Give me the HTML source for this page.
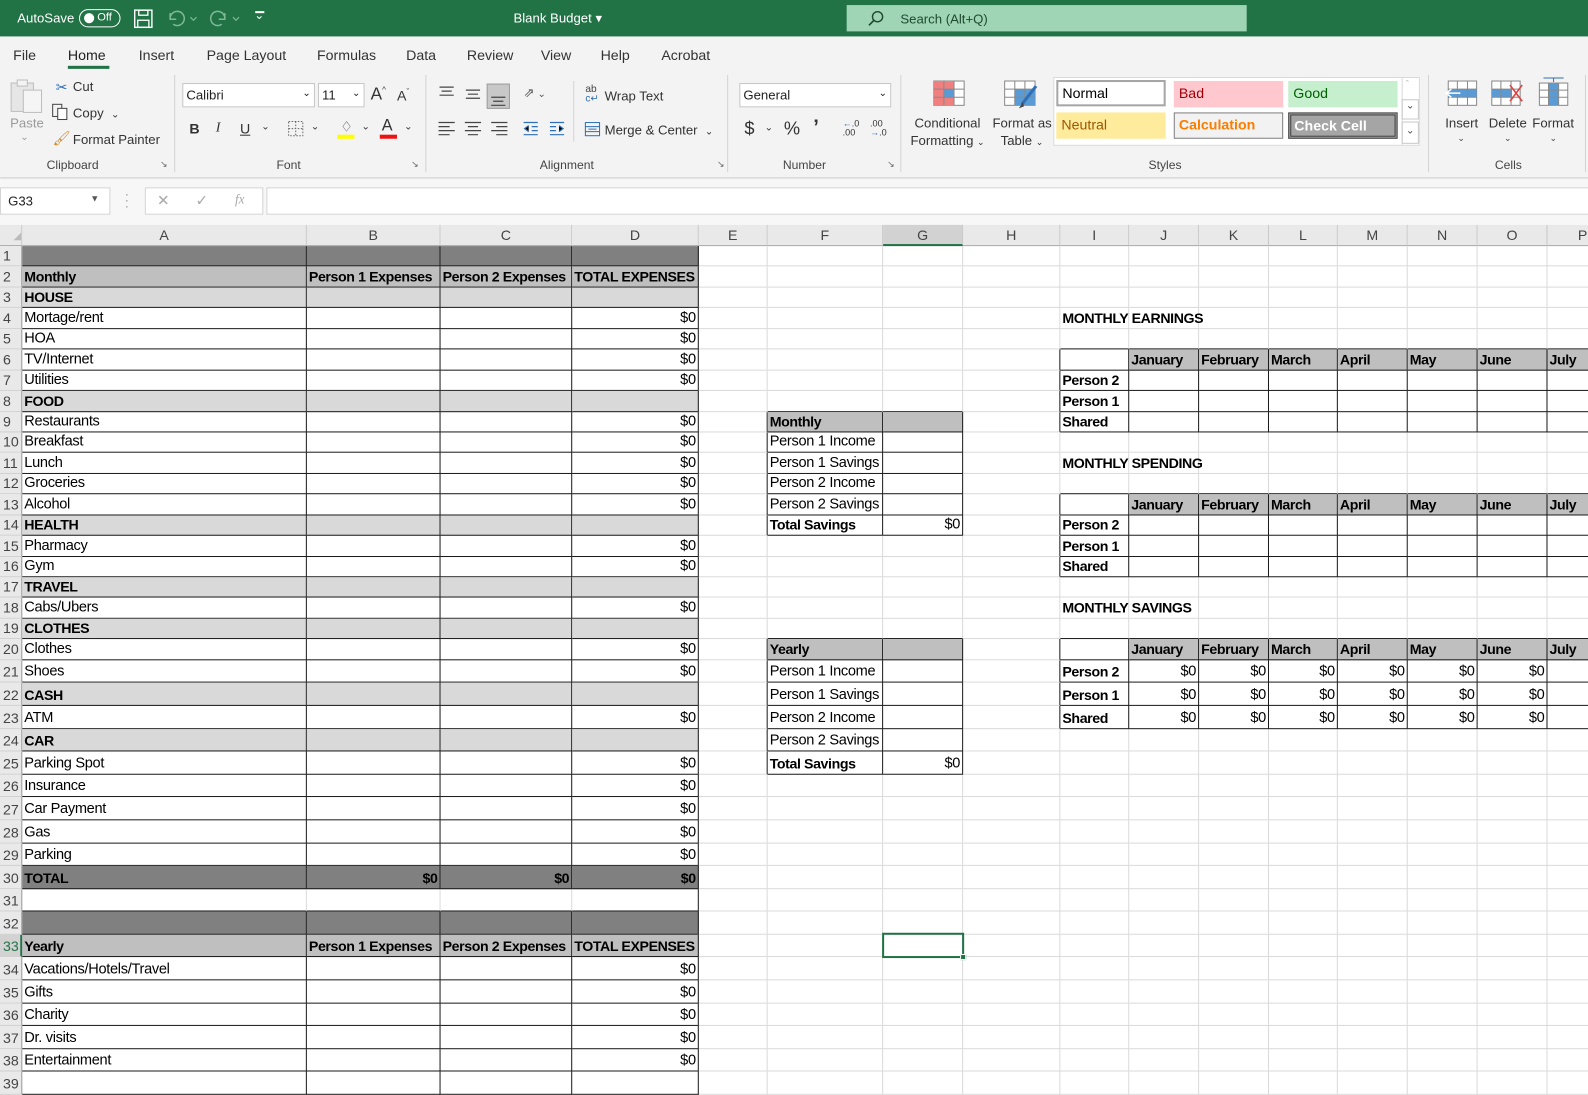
<!DOCTYPE html>
<html><head><meta charset="utf-8">
<style>
*{box-sizing:border-box;margin:0;padding:0}
body{width:1588px;height:1070px;overflow:hidden;background:#fff;font-family:"Liberation Sans",sans-serif;position:relative}
#w{position:absolute;left:0;top:0;width:1568px;height:1057px;transform:scale(1.01276);transform-origin:0 0}
.a{position:absolute;white-space:nowrap}
.t{font-size:13px;color:#333}
#title{left:0;top:0;width:1588px;height:36px;background:#217346}
#rib{left:0;top:36px;width:1588px;height:140px;background:#f3f3f3;border-bottom:1px solid #d6d6d6;box-shadow:0 2px 3px rgba(0,0,0,.12)}
#fbar{left:0;top:177px;width:1588px;height:45px;background:#f7f7f7}
.sep{position:absolute;width:1px;background:#d3d3d3;top:74px;height:96px}
.glab{position:absolute;top:156px;font-size:12px;color:#444}
.box{position:absolute;background:#fff;border:1px solid #c6c6c6;font-size:13px;color:#222;padding:3px 3px}
.sty{position:absolute;width:108px;height:26px;font-size:14px;padding:4px 5px}
table{position:absolute;left:0;top:222px;border-collapse:separate;border-spacing:0;table-layout:fixed;width:1588px}
td{border-right:1px solid #dadada;border-bottom:1px solid #dadada;font-size:14.4px;letter-spacing:-0.3px;color:#000;padding:0 2px 2px;vertical-align:bottom;white-space:nowrap;overflow:visible;line-height:16px}
tr.p td{height:20.45px}
tr.q td{height:22.6px}
tr.hd td{height:21px;background:#e9e9e9;text-align:center;color:#444;font-size:14px;vertical-align:middle;border-right:1px solid #c8c8c8;border-bottom:1px solid #ababab;padding:0;letter-spacing:0}
td.h{background:#e9e9e9;color:#444;border-right:1px solid #9b9b9b;border-bottom:1px solid #d0d0d0;padding:0 0 2px 3px;letter-spacing:0;font-size:14px}
.d{background:#808080}
.g{background:#bfbfbf}
.l{background:#d9d9d9}
.x{border-right-color:#1a1a1a;border-bottom-color:#1a1a1a}
.er{border-right-color:#1a1a1a}
.eb{border-bottom-color:#1a1a1a}
.n{text-align:right}
.B{font-weight:bold;letter-spacing:-0.4px;font-size:14px}
</style></head><body><div id="w">

<div id="title" class="a">
  <div class="a" style="left:17px;top:10px;color:#fff;font-size:13px">AutoSave</div>
  <div class="a" style="left:78px;top:9px;width:41px;height:18px;border:1.5px solid #fff;border-radius:9px"></div>
  <div class="a" style="left:83px;top:13px;width:10px;height:10px;border-radius:5px;background:#fff"></div>
  <div class="a" style="left:96px;top:11px;color:#fff;font-size:11px">Off</div>
  <svg class="a" style="left:132px;top:9px" width="19" height="19" viewBox="0 0 19 19"><rect x="1" y="1" width="17" height="17" fill="none" stroke="#fff" stroke-width="1.4"/><rect x="5" y="1" width="9" height="5" fill="none" stroke="#fff" stroke-width="1.3"/><rect x="4" y="11" width="11" height="7" fill="none" stroke="#fff" stroke-width="1.3"/></svg>
  <svg class="a" style="left:164px;top:9px" width="80" height="18" viewBox="0 0 80 18"><path d="M4 4v6h6M4 10a7 7 0 1 1 3 5" fill="none" stroke="#7fb896" stroke-width="1.5"/><path d="M24 8l3 3 3-3" fill="none" stroke="#7fb896" stroke-width="1.2"/><path d="M58 4v6h-6M58 10a7 7 0 1 0-3 5" fill="none" stroke="#7fb896" stroke-width="1.5"/><path d="M66 8l3 3 3-3" fill="none" stroke="#7fb896" stroke-width="1.2"/></svg>
  <div class="a" style="left:251px;top:8px;color:#fff;font-size:12px">&#8964;</div>
  <div class="a" style="left:252px;top:11px;width:9px;height:1.5px;background:#fff"></div>
  <div class="a" style="left:507px;top:10px;color:#fff;font-size:13px">Blank Budget &#9662;</div>
  <div class="a" style="left:836px;top:5px;width:395px;height:26px;background:#9fd4b4"></div>
  <svg class="a" style="left:857px;top:10px" width="16" height="16" viewBox="0 0 16 16"><circle cx="9.5" cy="6.5" r="5" fill="none" stroke="#1f4a30" stroke-width="1.4"/><path d="M6 10l-5 5" stroke="#1f4a30" stroke-width="1.6"/></svg>
  <div class="a" style="left:889px;top:11px;color:#1f4a30;font-size:13px">Search (Alt+Q)</div>
</div>

<div id="rib" class="a"></div>
<div class="a t" style="left:13px;top:46px;font-size:14px">File</div>
<div class="a t" style="left:67px;top:46px;font-size:14px;color:#222">Home</div>
<div class="a" style="left:67px;top:65px;width:41px;height:3px;background:#217346"></div>
<div class="a t" style="left:137px;top:46px;font-size:14px">Insert</div>
<div class="a t" style="left:204px;top:46px;font-size:14px">Page Layout</div>
<div class="a t" style="left:313px;top:46px;font-size:14px">Formulas</div>
<div class="a t" style="left:401px;top:46px;font-size:14px">Data</div>
<div class="a t" style="left:461px;top:46px;font-size:14px">Review</div>
<div class="a t" style="left:534px;top:46px;font-size:14px">View</div>
<div class="a t" style="left:593px;top:46px;font-size:14px">Help</div>
<div class="a t" style="left:653px;top:46px;font-size:14px">Acrobat</div>

<svg class="a" style="left:8px;top:77px" width="36" height="36" viewBox="0 0 36 36"><rect x="3" y="5" width="22" height="28" fill="#e6e6e6" stroke="#bdbdbd"/><rect x="9" y="2" width="10" height="6" fill="#f3f3f3" stroke="#bdbdbd"/><rect x="15" y="12" width="18" height="22" fill="#f5f5f5" stroke="#bdbdbd"/></svg>
<div class="a" style="left:10px;top:114px;font-size:13px;color:#9a9a9a">Paste</div>
<div class="a" style="left:20px;top:130px;font-size:10px;color:#9a9a9a">&#8964;</div>
<div class="a t" style="left:55px;top:78px;color:#2f6fb5;font-size:14px">&#9986;</div>
<div class="a t" style="left:72px;top:78px">Cut</div>
<svg class="a" style="left:51px;top:102px" width="17" height="17" viewBox="0 0 17 17"><rect x="1" y="1" width="9" height="12" fill="none" stroke="#444"/><rect x="6" y="5" width="9" height="11" fill="#fff" stroke="#444"/></svg>
<div class="a t" style="left:72px;top:104px">Copy &nbsp;<span style="font-size:10px">&#8964;</span></div>
<div class="a" style="left:52px;top:128px;font-size:14px;color:#d08a2a">&#128396;</div>
<div class="a t" style="left:72px;top:130px">Format Painter</div>
<div class="glab" style="left:46px">Clipboard</div>
<div class="a" style="left:158px;top:157px;font-size:9px;color:#666">&#8600;</div>
<div class="sep" style="left:172px"></div>

<div class="box" style="left:180px;top:82px;width:131px;height:24px">Calibri<span style="position:absolute;right:3px;top:4px;font-size:10px">&#8964;</span></div>
<div class="box" style="left:314px;top:82px;width:46px;height:24px">11<span style="position:absolute;right:3px;top:4px;font-size:10px">&#8964;</span></div>
<div class="a" style="left:366px;top:83px;font-size:17px;color:#333">A<sup style="font-size:8px">^</sup></div>
<div class="a" style="left:392px;top:86px;font-size:14px;color:#333">A<sup style="font-size:8px">&#711;</sup></div>
<div class="a" style="left:187px;top:119px;font-size:14px;font-weight:bold;color:#333">B</div>
<div class="a" style="left:213px;top:119px;font-size:14px;font-style:italic;font-family:'Liberation Serif',serif;color:#333">I</div>
<div class="a" style="left:237px;top:119px;font-size:14px;text-decoration:underline;color:#333">U</div>
<div class="a" style="left:258px;top:120px;font-size:10px;color:#333">&#8964;</div>
<svg class="a" style="left:284px;top:119px" width="16" height="16"><rect x="1" y="1" width="14" height="14" fill="none" stroke="#666" stroke-dasharray="1.5 1.5"/><path d="M8 1v14M1 8h14" stroke="#666" stroke-dasharray="1.5 1.5"/></svg>
<div class="a" style="left:307px;top:120px;font-size:10px;color:#333">&#8964;</div>
<div class="a" style="left:336px;top:117px;font-size:14px;color:#333">&#9826;</div>
<div class="a" style="left:333px;top:133px;width:17px;height:4px;background:#ffff00"></div>
<div class="a" style="left:357px;top:120px;font-size:10px;color:#333">&#8964;</div>
<div class="a" style="left:377px;top:116px;font-size:16px;color:#333">A</div>
<div class="a" style="left:375px;top:133px;width:17px;height:4px;background:#e11"></div>
<div class="a" style="left:399px;top:120px;font-size:10px;color:#333">&#8964;</div>
<div class="glab" style="left:273px">Font</div>
<div class="a" style="left:406px;top:157px;font-size:9px;color:#666">&#8600;</div>
<div class="sep" style="left:420px"></div>

<svg class="a" style="left:432px;top:82px" width="72" height="26"><g stroke="#444" stroke-width="1.2"><path d="M2 4h14M4 8h10M2 12h14"/><path d="M28 7h14M30 11h10M28 15h14"/></g><rect x="49" y="1" width="22" height="24" fill="#c8c8c8" stroke="#999"/><path d="M53 14h14M55 18h10M53 22h14" stroke="#444" stroke-width="1.2"/></svg>
<div class="a" style="left:517px;top:84px;font-size:13px;color:#555">&#8663;<span style="font-size:10px"> &#8964;</span></div>
<svg class="a" style="left:432px;top:119px" width="128" height="16"><g stroke="#444" stroke-width="1.2"><path d="M1 2h16M1 6h11M1 10h16M1 14h11"/><path d="M27 2h16M30 6h10M27 10h16M30 14h10"/><path d="M53 2h16M58 6h11M53 10h16M58 14h11"/><path d="M85 2h14M93 6h6M93 10h6M85 14h14M90 5l-4 3 4 3" stroke="#2f6fb5"/><path d="M111 2h14M111 6h6M111 10h6M111 14h14M120 5l4 3-4 3" stroke="#2f6fb5"/></g></svg>
<div class="sep" style="left:566px;top:80px;height:60px"></div>
<div class="a" style="left:578px;top:84px;font-size:10px;color:#444;line-height:9px">ab<br><span style="color:#2f6fb5">c&#8629;</span></div>
<div class="a t" style="left:597px;top:87px">Wrap Text</div>
<svg class="a" style="left:577px;top:120px" width="16" height="15"><rect x="1" y="1" width="14" height="13" fill="none" stroke="#2f6fb5"/><path d="M1 5h14M1 10h14" stroke="#2f6fb5"/><path d="M4 7.5h8" stroke="#2f6fb5"/></svg>
<div class="a t" style="left:597px;top:121px">Merge &amp; Center &nbsp;<span style="font-size:10px">&#8964;</span></div>
<div class="glab" style="left:533px">Alignment</div>
<div class="a" style="left:708px;top:157px;font-size:9px;color:#666">&#8600;</div>
<div class="sep" style="left:718px"></div>

<div class="box" style="left:730px;top:82px;width:150px;height:24px">General<span style="position:absolute;right:3px;top:4px;font-size:10px">&#8964;</span></div>
<div class="a" style="left:735px;top:117px;font-size:18px;color:#333">$</div>
<div class="a" style="left:755px;top:121px;font-size:10px;color:#333">&#8964;</div>
<div class="a" style="left:774px;top:117px;font-size:18px;color:#333">%</div>
<div class="a" style="left:803px;top:115px;font-size:20px;font-weight:bold;color:#333">&#8217;</div>
<div class="a" style="left:832px;top:118px;font-size:9px;line-height:9px;color:#333"><span style="color:#2f6fb5">&#8592;</span>.0<br>.00</div>
<div class="a" style="left:859px;top:118px;font-size:9px;line-height:9px;color:#333">.00<br><span style="color:#2f6fb5">&#8594;</span>.0</div>
<div class="glab" style="left:773px">Number</div>
<div class="a" style="left:876px;top:157px;font-size:9px;color:#666">&#8600;</div>
<div class="sep" style="left:889px"></div>

<svg class="a" style="left:921px;top:79px" width="32" height="26"><rect x="1" y="1" width="30" height="24" fill="#fff" stroke="#888"/><rect x="1" y="1" width="20" height="8" fill="#f08080"/><rect x="1" y="9" width="10" height="8" fill="#f08080"/><rect x="11" y="9" width="10" height="8" fill="#5b9bd5"/><rect x="1" y="17" width="20" height="8" fill="#f08080"/><path d="M11 1v24M21 1v24M1 9h30M1 17h30" stroke="#888"/></svg>
<div class="a t" style="left:903px;top:114px">Conditional</div>
<div class="a t" style="left:899px;top:131px">Formatting <span style="font-size:9px">&#8964;</span></div>
<svg class="a" style="left:991px;top:79px" width="34" height="30"><rect x="1" y="1" width="30" height="24" fill="#fff" stroke="#888"/><rect x="11" y="9" width="20" height="16" fill="#5b9bd5"/><path d="M11 1v24M21 1v24M1 9h30M1 17h30" stroke="#888"/><path d="M32 6L18 24" stroke="#2f6fb5" stroke-width="3"/><path d="M19 22l-4 6 5-2z" fill="#444"/></svg>
<div class="a t" style="left:980px;top:114px">Format as</div>
<div class="a t" style="left:988px;top:131px">Table <span style="font-size:9px">&#8964;</span></div>
<div class="a" style="left:1040px;top:76px;width:362px;height:68px;background:#fff;border:1px solid #dadada"></div>
<div class="sty a" style="left:1043px;top:79px;background:#fff;border:2px solid #a6a6a6;color:#000;padding:3px 4px">Normal</div>
<div class="sty a" style="left:1159px;top:80px;background:#ffc7ce;color:#9c0006">Bad</div>
<div class="sty a" style="left:1272px;top:80px;background:#c6efce;color:#006100">Good</div>
<div class="sty a" style="left:1043px;top:111px;background:#ffeb9c;color:#9c5700">Neutral</div>
<div class="sty a" style="left:1159px;top:111px;background:#f2f2f2;border:1px solid #7f7f7f;color:#fa7d00;font-weight:bold;padding:3px 4px">Calculation</div>
<div class="sty a" style="left:1272px;top:111px;background:#a5a5a5;border:3px double #3f3f3f;color:#fff;font-weight:bold;padding:2px 3px">Check Cell</div>
<div class="a" style="left:1384px;top:77px;width:17px;height:66px;border-left:1px solid #dadada"></div>
<div class="a" style="left:1388px;top:78px;font-size:9px;color:#aaa">&#710;</div>
<div class="a" style="left:1384px;top:98px;width:17px;height:20px;border:1px solid #c8c8c8;font-size:10px;text-align:center;color:#444">&#8964;</div>
<div class="a" style="left:1384px;top:120px;width:17px;height:22px;border:1px solid #c8c8c8;font-size:10px;text-align:center;color:#444;line-height:18px">&#8964;</div>
<div class="glab" style="left:1134px">Styles</div>
<div class="sep" style="left:1410px"></div>

<svg class="a" style="left:1426px;top:78px" width="36" height="28"><rect x="4" y="2" width="28" height="24" fill="#fff" stroke="#888"/><rect x="4" y="10" width="28" height="8" fill="#5b9bd5"/><path d="M13 2v24M23 2v24M4 10h28M4 18h28" stroke="#888"/><path d="M2 14h14M7 10l-5 4 5 4" fill="none" stroke="#fff" stroke-width="1.5"/></svg>
<svg class="a" style="left:1471px;top:78px" width="36" height="28"><rect x="2" y="2" width="28" height="24" fill="#fff" stroke="#888"/><rect x="2" y="10" width="20" height="8" fill="#5b9bd5"/><path d="M11 2v24M21 2v24M2 10h28M2 18h28" stroke="#888"/><path d="M20 6l12 16M32 6L20 22" stroke="#e04040" stroke-width="1.6"/></svg>
<svg class="a" style="left:1518px;top:74px" width="32" height="32"><path d="M6 3h20M16 3v4" stroke="#2f6fb5"/><rect x="2" y="8" width="28" height="22" fill="#fff" stroke="#888"/><rect x="11" y="8" width="10" height="22" fill="#5b9bd5"/><path d="M11 8v22M21 8v22M2 15h28M2 22h28" stroke="#888"/></svg>
<div class="a t" style="left:1427px;top:114px">Insert</div>
<div class="a t" style="left:1470px;top:114px">Delete</div>
<div class="a t" style="left:1513px;top:114px">Format</div>
<div class="a" style="left:1439px;top:131px;font-size:9px;color:#444">&#8964;</div>
<div class="a" style="left:1485px;top:131px;font-size:9px;color:#444">&#8964;</div>
<div class="a" style="left:1530px;top:131px;font-size:9px;color:#444">&#8964;</div>
<div class="glab" style="left:1476px">Cells</div>
<div class="sep" style="left:1565px"></div>

<div id="fbar" class="a"></div>
<div class="a" style="left:0;top:185px;width:109px;height:27px;background:#fff;border:1px solid #d4d4d4;font-size:13px;color:#222;padding:5px 7px">G33<span style="position:absolute;right:10px;top:5px;font-size:9px;color:#555">&#9660;</span></div>
<div class="a" style="left:123px;top:189px;font-size:13px;color:#999;line-height:6px">&#183;<br>&#183;<br>&#183;</div>
<div class="a" style="left:143px;top:185px;width:117px;height:27px;background:#fff;border:1px solid #d4d4d4"></div>
<div class="a" style="left:155px;top:189px;font-size:15px;color:#aaa">&#10005;</div>
<div class="a" style="left:193px;top:189px;font-size:15px;color:#aaa">&#10003;</div>
<div class="a" style="left:232px;top:189px;font-size:13px;color:#aaa;font-style:italic;font-family:'Liberation Serif',serif">fx</div>
<div class="a" style="left:263px;top:185px;width:1325px;height:27px;background:#fff;border:1px solid #d4d4d4"></div>

<table>
<colgroup><col style="width:22px"><col style="width:281px"><col style="width:132px"><col style="width:130px"><col style="width:125px"><col style="width:68px"><col style="width:114px"><col style="width:79px"><col style="width:96px"><col style="width:68px"><col style="width:69px"><col style="width:69px"><col style="width:68px"><col style="width:69px"><col style="width:69px"><col style="width:69px"><col style="width:80px"></colgroup>
<tr class="hd"><td style="color:#bbb;font-size:10px;text-align:right;vertical-align:bottom">&#9698;</td><td>A</td><td>B</td><td>C</td><td>D</td><td>E</td><td>F</td><td style="background:#d2d2d2;border-bottom:2px solid #217346">G</td><td>H</td><td>I</td><td>J</td><td>K</td><td>L</td><td>M</td><td>N</td><td>O</td><td style="text-align:left;padding-left:30px">P</td></tr>

<tr class="p"><td class="h">1</td><td class="x d"></td><td class="x d"></td><td class="x d"></td><td class="x d"></td><td></td><td></td><td></td><td></td><td></td><td></td><td></td><td></td><td></td><td></td><td></td><td></td></tr>
<tr class="p"><td class="h">2</td><td class="x g B">Monthly</td><td class="x g B">Person 1 Expenses</td><td class="x g B">Person 2 Expenses</td><td class="x g B">TOTAL EXPENSES</td><td></td><td></td><td></td><td></td><td></td><td></td><td></td><td></td><td></td><td></td><td></td><td></td></tr>
<tr class="p"><td class="h">3</td><td class="x l B">HOUSE</td><td class="x l"></td><td class="x l"></td><td class="x l"></td><td></td><td></td><td></td><td></td><td></td><td></td><td></td><td></td><td></td><td></td><td></td><td></td></tr>
<tr class="p"><td class="h">4</td><td class="x">Mortage/rent</td><td class="x"></td><td class="x"></td><td class="x n">$0</td><td></td><td></td><td></td><td></td><td class="B">MONTHLY EARNINGS</td><td></td><td></td><td></td><td></td><td></td><td></td><td></td></tr>
<tr class="p"><td class="h">5</td><td class="x">HOA</td><td class="x"></td><td class="x"></td><td class="x n">$0</td><td></td><td></td><td></td><td></td><td class="eb"></td><td class="eb"></td><td class="eb"></td><td class="eb"></td><td class="eb"></td><td class="eb"></td><td class="eb"></td><td class="eb"></td></tr>
<tr class="p"><td class="h">6</td><td class="x">TV/Internet</td><td class="x"></td><td class="x"></td><td class="x n">$0</td><td></td><td></td><td></td><td class="er"></td><td class="x"></td><td class="x g B">January</td><td class="x g B">February</td><td class="x g B">March</td><td class="x g B">April</td><td class="x g B">May</td><td class="x g B">June</td><td class="x g B">July</td></tr>
<tr class="p"><td class="h">7</td><td class="x">Utilities</td><td class="x"></td><td class="x"></td><td class="x n">$0</td><td></td><td></td><td></td><td class="er"></td><td class="x B">Person 2</td><td class="x"></td><td class="x"></td><td class="x"></td><td class="x"></td><td class="x"></td><td class="x"></td><td class="x"></td></tr>
<tr class="p"><td class="h">8</td><td class="x l B">FOOD</td><td class="x l"></td><td class="x l"></td><td class="x l"></td><td></td><td class="eb"></td><td class="eb"></td><td class="er"></td><td class="x B">Person 1</td><td class="x"></td><td class="x"></td><td class="x"></td><td class="x"></td><td class="x"></td><td class="x"></td><td class="x"></td></tr>
<tr class="p"><td class="h">9</td><td class="x">Restaurants</td><td class="x"></td><td class="x"></td><td class="x n">$0</td><td class="er"></td><td class="x g B">Monthly</td><td class="x g"></td><td class="er"></td><td class="x B">Shared</td><td class="x"></td><td class="x"></td><td class="x"></td><td class="x"></td><td class="x"></td><td class="x"></td><td class="x"></td></tr>
<tr class="p"><td class="h">10</td><td class="x">Breakfast</td><td class="x"></td><td class="x"></td><td class="x n">$0</td><td class="er"></td><td class="x">Person 1 Income</td><td class="x"></td><td></td><td></td><td></td><td></td><td></td><td></td><td></td><td></td><td></td></tr>
<tr class="p"><td class="h">11</td><td class="x">Lunch</td><td class="x"></td><td class="x"></td><td class="x n">$0</td><td class="er"></td><td class="x">Person 1 Savings</td><td class="x"></td><td></td><td class="B">MONTHLY SPENDING</td><td></td><td></td><td></td><td></td><td></td><td></td><td></td></tr>
<tr class="p"><td class="h">12</td><td class="x">Groceries</td><td class="x"></td><td class="x"></td><td class="x n">$0</td><td class="er"></td><td class="x">Person 2 Income</td><td class="x"></td><td></td><td class="eb"></td><td class="eb"></td><td class="eb"></td><td class="eb"></td><td class="eb"></td><td class="eb"></td><td class="eb"></td><td class="eb"></td></tr>
<tr class="p"><td class="h">13</td><td class="x">Alcohol</td><td class="x"></td><td class="x"></td><td class="x n">$0</td><td class="er"></td><td class="x">Person 2 Savings</td><td class="x"></td><td class="er"></td><td class="x"></td><td class="x g B">January</td><td class="x g B">February</td><td class="x g B">March</td><td class="x g B">April</td><td class="x g B">May</td><td class="x g B">June</td><td class="x g B">July</td></tr>
<tr class="p"><td class="h">14</td><td class="x l B">HEALTH</td><td class="x l"></td><td class="x l"></td><td class="x l"></td><td class="er"></td><td class="x B">Total Savings</td><td class="x n">$0</td><td class="er"></td><td class="x B">Person 2</td><td class="x"></td><td class="x"></td><td class="x"></td><td class="x"></td><td class="x"></td><td class="x"></td><td class="x"></td></tr>
<tr class="p"><td class="h">15</td><td class="x">Pharmacy</td><td class="x"></td><td class="x"></td><td class="x n">$0</td><td></td><td></td><td></td><td class="er"></td><td class="x B">Person 1</td><td class="x"></td><td class="x"></td><td class="x"></td><td class="x"></td><td class="x"></td><td class="x"></td><td class="x"></td></tr>
<tr class="p"><td class="h">16</td><td class="x">Gym</td><td class="x"></td><td class="x"></td><td class="x n">$0</td><td></td><td></td><td></td><td class="er"></td><td class="x B">Shared</td><td class="x"></td><td class="x"></td><td class="x"></td><td class="x"></td><td class="x"></td><td class="x"></td><td class="x"></td></tr>
<tr class="p"><td class="h">17</td><td class="x l B">TRAVEL</td><td class="x l"></td><td class="x l"></td><td class="x l"></td><td></td><td></td><td></td><td></td><td></td><td></td><td></td><td></td><td></td><td></td><td></td><td></td></tr>
<tr class="p"><td class="h">18</td><td class="x">Cabs/Ubers</td><td class="x"></td><td class="x"></td><td class="x n">$0</td><td></td><td></td><td></td><td></td><td class="B">MONTHLY SAVINGS</td><td></td><td></td><td></td><td></td><td></td><td></td><td></td></tr>
<tr class="p"><td class="h">19</td><td class="x l B">CLOTHES</td><td class="x l"></td><td class="x l"></td><td class="x l"></td><td></td><td class="eb"></td><td class="eb"></td><td></td><td class="eb"></td><td class="eb"></td><td class="eb"></td><td class="eb"></td><td class="eb"></td><td class="eb"></td><td class="eb"></td><td class="eb"></td></tr>
<tr class="p"><td class="h">20</td><td class="x">Clothes</td><td class="x"></td><td class="x"></td><td class="x n">$0</td><td class="er"></td><td class="x g B">Yearly</td><td class="x g"></td><td class="er"></td><td class="x"></td><td class="x g B">January</td><td class="x g B">February</td><td class="x g B">March</td><td class="x g B">April</td><td class="x g B">May</td><td class="x g B">June</td><td class="x g B">July</td></tr>
<tr class="q"><td class="h">21</td><td class="x">Shoes</td><td class="x"></td><td class="x"></td><td class="x n">$0</td><td class="er"></td><td class="x">Person 1 Income</td><td class="x"></td><td class="er"></td><td class="x B">Person 2</td><td class="x n">$0</td><td class="x n">$0</td><td class="x n">$0</td><td class="x n">$0</td><td class="x n">$0</td><td class="x n">$0</td><td class="x"></td></tr>
<tr class="q"><td class="h">22</td><td class="x l B">CASH</td><td class="x l"></td><td class="x l"></td><td class="x l"></td><td class="er"></td><td class="x">Person 1 Savings</td><td class="x"></td><td class="er"></td><td class="x B">Person 1</td><td class="x n">$0</td><td class="x n">$0</td><td class="x n">$0</td><td class="x n">$0</td><td class="x n">$0</td><td class="x n">$0</td><td class="x"></td></tr>
<tr class="q"><td class="h">23</td><td class="x">ATM</td><td class="x"></td><td class="x"></td><td class="x n">$0</td><td class="er"></td><td class="x">Person 2 Income</td><td class="x"></td><td class="er"></td><td class="x B">Shared</td><td class="x n">$0</td><td class="x n">$0</td><td class="x n">$0</td><td class="x n">$0</td><td class="x n">$0</td><td class="x n">$0</td><td class="x"></td></tr>
<tr class="q"><td class="h">24</td><td class="x l B">CAR</td><td class="x l"></td><td class="x l"></td><td class="x l"></td><td class="er"></td><td class="x">Person 2 Savings</td><td class="x"></td><td></td><td></td><td></td><td></td><td></td><td></td><td></td><td></td><td></td></tr>
<tr class="q"><td class="h">25</td><td class="x">Parking Spot</td><td class="x"></td><td class="x"></td><td class="x n">$0</td><td class="er"></td><td class="x B">Total Savings</td><td class="x n">$0</td><td></td><td></td><td></td><td></td><td></td><td></td><td></td><td></td><td></td></tr>
<tr class="q"><td class="h">26</td><td class="x">Insurance</td><td class="x"></td><td class="x"></td><td class="x n">$0</td><td></td><td></td><td></td><td></td><td></td><td></td><td></td><td></td><td></td><td></td><td></td><td></td></tr>
<tr class="q"><td class="h">27</td><td class="x">Car Payment</td><td class="x"></td><td class="x"></td><td class="x n">$0</td><td></td><td></td><td></td><td></td><td></td><td></td><td></td><td></td><td></td><td></td><td></td><td></td></tr>
<tr class="q"><td class="h">28</td><td class="x">Gas</td><td class="x"></td><td class="x"></td><td class="x n">$0</td><td></td><td></td><td></td><td></td><td></td><td></td><td></td><td></td><td></td><td></td><td></td><td></td></tr>
<tr class="q"><td class="h">29</td><td class="x">Parking</td><td class="x"></td><td class="x"></td><td class="x n">$0</td><td></td><td></td><td></td><td></td><td></td><td></td><td></td><td></td><td></td><td></td><td></td><td></td></tr>
<tr class="q"><td class="h">30</td><td class="x d B">TOTAL</td><td class="x d n B">$0</td><td class="x d n B">$0</td><td class="x d n B">$0</td><td></td><td></td><td></td><td></td><td></td><td></td><td></td><td></td><td></td><td></td><td></td><td></td></tr>
<tr class="q"><td class="h">31</td><td class="eb"></td><td class="eb"></td><td class="eb"></td><td class="eb er"></td><td></td><td></td><td></td><td></td><td></td><td></td><td></td><td></td><td></td><td></td><td></td><td></td></tr>
<tr class="q"><td class="h">32</td><td class="x d"></td><td class="x d"></td><td class="x d"></td><td class="x d"></td><td></td><td></td><td></td><td></td><td></td><td></td><td></td><td></td><td></td><td></td><td></td><td></td></tr>
<tr class="q"><td class="h" style="color:#217346;background:#d2d2d2;border-right:2px solid #217346">33</td><td class="x g B">Yearly</td><td class="x g B">Person 1 Expenses</td><td class="x g B">Person 2 Expenses</td><td class="x g B">TOTAL EXPENSES</td><td></td><td></td><td></td><td></td><td></td><td></td><td></td><td></td><td></td><td></td><td></td><td></td></tr>
<tr class="q"><td class="h">34</td><td class="x">Vacations/Hotels/Travel</td><td class="x"></td><td class="x"></td><td class="x n">$0</td><td></td><td></td><td></td><td></td><td></td><td></td><td></td><td></td><td></td><td></td><td></td><td></td></tr>
<tr class="q"><td class="h">35</td><td class="x">Gifts</td><td class="x"></td><td class="x"></td><td class="x n">$0</td><td></td><td></td><td></td><td></td><td></td><td></td><td></td><td></td><td></td><td></td><td></td><td></td></tr>
<tr class="q"><td class="h">36</td><td class="x">Charity</td><td class="x"></td><td class="x"></td><td class="x n">$0</td><td></td><td></td><td></td><td></td><td></td><td></td><td></td><td></td><td></td><td></td><td></td><td></td></tr>
<tr class="q"><td class="h">37</td><td class="x">Dr. visits</td><td class="x"></td><td class="x"></td><td class="x n">$0</td><td></td><td></td><td></td><td></td><td></td><td></td><td></td><td></td><td></td><td></td><td></td><td></td></tr>
<tr class="q"><td class="h">38</td><td class="x">Entertainment</td><td class="x"></td><td class="x"></td><td class="x n">$0</td><td></td><td></td><td></td><td></td><td></td><td></td><td></td><td></td><td></td><td></td><td></td><td></td></tr>
<tr class="q"><td class="h">39</td><td class="x"></td><td class="x"></td><td class="x"></td><td class="x"></td><td></td><td></td><td></td><td></td><td></td><td></td><td></td><td></td><td></td><td></td><td></td><td></td></tr>
</table>
<div class="a" style="left:871px;top:921px;width:81px;height:25px;border:2px solid #217346"></div>
<div class="a" style="left:948px;top:942px;width:6px;height:6px;background:#217346;border:1px solid #fff"></div>
</div></body></html>
